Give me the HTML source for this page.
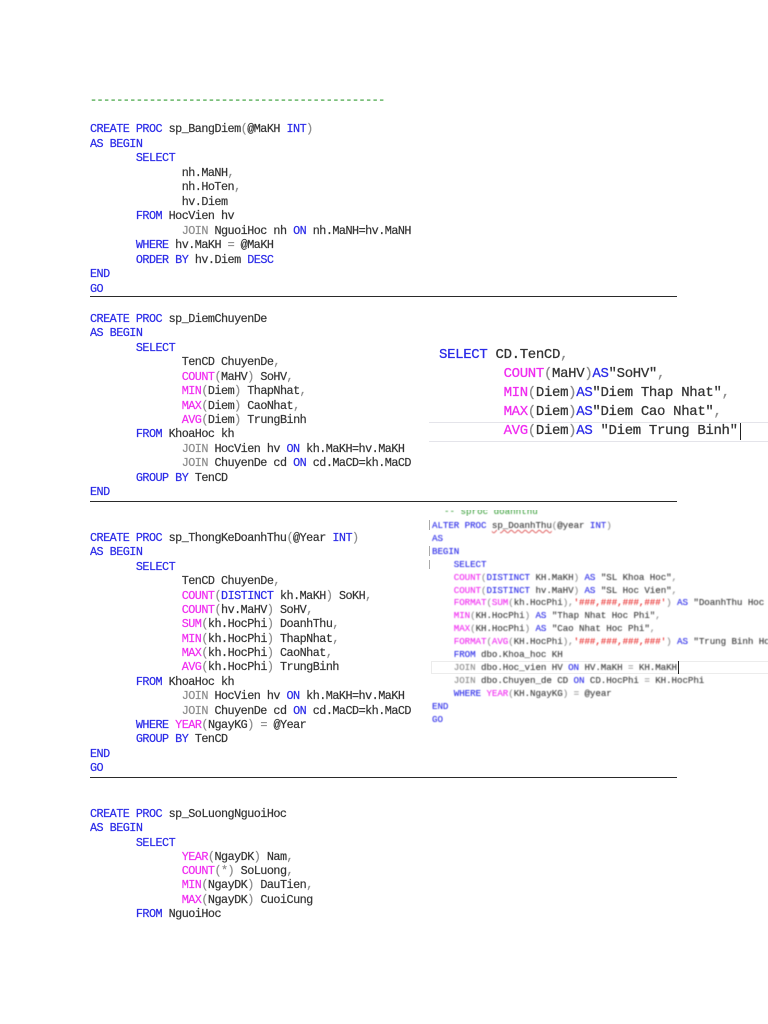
<!DOCTYPE html>
<html><head><meta charset="utf-8">
<style>
html,body{margin:0;padding:0;background:#fff;width:768px;height:1024px;overflow:hidden}
#p{position:relative;width:768px;height:1024px;overflow:hidden;background:#fff}
pre{position:absolute;margin:0;font-family:"Liberation Mono",monospace;color:#333;filter:blur(.3px)}
.c{left:90px;font-size:11.8px;letter-spacing:-.53px;width:330px;overflow:hidden;-webkit-text-stroke:.2px currentColor}
.k{color:#2a2ae8}.f{color:#f02cf0}.g{color:#8c8c8c}.n{color:#2f9a2f}.r{color:#e82020}
.hr{position:absolute;left:90px;width:587px;height:1px;background:#2a2a2a}
.a{left:439px;font-size:14px;letter-spacing:-.33px;line-height:19.1px;top:345.5px;width:329px;overflow:hidden;color:#333;filter:blur(.35px);-webkit-text-stroke:.25px currentColor}
.b{left:432px;top:520px;width:336px;overflow:hidden;font-size:9.2px;letter-spacing:-.07px;line-height:12.9px;color:#3a3a3a;filter:blur(.4px);-webkit-text-stroke:.1px currentColor}
.box{position:absolute}
</style></head><body><div id="p">

<pre class="c" style="top:93px;line-height:14.5px"><span class="n">---------------------------------------------</span>

<span class="k">CREATE PROC</span> sp_BangDiem<span class="g">(</span>@MaKH <span class="k">INT</span><span class="g">)</span>
<span class="k">AS BEGIN</span>
       <span class="k">SELECT</span>
              nh.MaNH<span class="g">,</span>
              nh.HoTen<span class="g">,</span>
              hv.Diem
       <span class="k">FROM</span> HocVien hv
              <span class="g">JOIN</span> NguoiHoc nh <span class="k">ON</span> nh.MaNH=hv.MaNH
       <span class="k">WHERE</span> hv.MaKH <span class="g">=</span> @MaKH
       <span class="k">ORDER BY</span> hv.Diem <span class="k">DESC</span>
<span class="k">END</span>
<span class="k">GO</span></pre>
<div class="hr" style="top:296px"></div>

<pre class="c" style="top:312px;line-height:14.42px"><span class="k">CREATE PROC</span> sp_DiemChuyenDe
<span class="k">AS BEGIN</span>
       <span class="k">SELECT</span>
              TenCD ChuyenDe<span class="g">,</span>
              <span class="f">COUNT</span><span class="g">(</span>MaHV<span class="g">)</span> SoHV<span class="g">,</span>
              <span class="f">MIN</span><span class="g">(</span>Diem<span class="g">)</span> ThapNhat<span class="g">,</span>
              <span class="f">MAX</span><span class="g">(</span>Diem<span class="g">)</span> CaoNhat<span class="g">,</span>
              <span class="f">AVG</span><span class="g">(</span>Diem<span class="g">)</span> TrungBinh
       <span class="k">FROM</span> KhoaHoc kh
              <span class="g">JOIN</span> HocVien hv <span class="k">ON</span> kh.MaKH=hv.MaKH
              <span class="g">JOIN</span> ChuyenDe cd <span class="k">ON</span> cd.MaCD=kh.MaCD
       <span class="k">GROUP BY</span> TenCD
<span class="k">END</span></pre>
<div class="hr" style="top:501px"></div>

<pre class="c" style="top:531px;line-height:14.38px"><span class="k">CREATE PROC</span> sp_ThongKeDoanhThu<span class="g">(</span>@Year <span class="k">INT</span><span class="g">)</span>
<span class="k">AS BEGIN</span>
       <span class="k">SELECT</span>
              TenCD ChuyenDe<span class="g">,</span>
              <span class="f">COUNT</span><span class="g">(</span><span class="k">DISTINCT</span> kh.MaKH<span class="g">)</span> SoKH<span class="g">,</span>
              <span class="f">COUNT</span><span class="g">(</span>hv.MaHV<span class="g">)</span> SoHV<span class="g">,</span>
              <span class="f">SUM</span><span class="g">(</span>kh.HocPhi<span class="g">)</span> DoanhThu<span class="g">,</span>
              <span class="f">MIN</span><span class="g">(</span>kh.HocPhi<span class="g">)</span> ThapNhat<span class="g">,</span>
              <span class="f">MAX</span><span class="g">(</span>kh.HocPhi<span class="g">)</span> CaoNhat<span class="g">,</span>
              <span class="f">AVG</span><span class="g">(</span>kh.HocPhi<span class="g">)</span> TrungBinh
       <span class="k">FROM</span> KhoaHoc kh
              <span class="g">JOIN</span> HocVien hv <span class="k">ON</span> kh.MaKH=hv.MaKH
              <span class="g">JOIN</span> ChuyenDe cd <span class="k">ON</span> cd.MaCD=kh.MaCD
       <span class="k">WHERE</span> <span class="f">YEAR</span><span class="g">(</span>NgayKG<span class="g">)</span> <span class="g">=</span> @Year
       <span class="k">GROUP BY</span> TenCD
<span class="k">END</span>
<span class="k">GO</span></pre>
<div class="hr" style="top:777px"></div>

<pre class="c" style="top:807px;line-height:14.3px"><span class="k">CREATE PROC</span> sp_SoLuongNguoiHoc
<span class="k">AS BEGIN</span>
       <span class="k">SELECT</span>
              <span class="f">YEAR</span><span class="g">(</span>NgayDK<span class="g">)</span> Nam<span class="g">,</span>
              <span class="f">COUNT</span><span class="g">(*)</span> SoLuong<span class="g">,</span>
              <span class="f">MIN</span><span class="g">(</span>NgayDK<span class="g">)</span> DauTien<span class="g">,</span>
              <span class="f">MAX</span><span class="g">(</span>NgayDK<span class="g">)</span> CuoiCung
       <span class="k">FROM</span> NguoiHoc</pre>

<!-- screenshot 1 -->
<div class="box" style="left:429px;top:422px;width:339px;height:20px;border-top:1px solid #e4e4ea;border-bottom:1px solid #e4e4ea;box-sizing:border-box"></div>
<pre class="a"><span class="k">SELECT</span> CD.TenCD<span class="g">,</span>
        <span class="f">COUNT</span><span class="g">(</span>MaHV<span class="g">)</span><span class="k">AS</span>"SoHV"<span class="g">,</span>
        <span class="f">MIN</span><span class="g">(</span>Diem<span class="g">)</span><span class="k">AS</span>"Diem Thap Nhat"<span class="g">,</span>
        <span class="f">MAX</span><span class="g">(</span>Diem<span class="g">)</span><span class="k">AS</span>"Diem Cao Nhat"<span class="g">,</span>
        <span class="f">AVG</span><span class="g">(</span>Diem<span class="g">)</span><span class="k">AS</span> "Diem Trung Binh"</pre>
<div class="box" style="left:740px;top:423px;width:1px;height:17px;background:#222"></div>

<!-- screenshot 2 -->
<div class="box" style="left:431px;top:661px;width:337px;height:13px;border:1px solid #ececec;border-right:0;box-sizing:border-box"></div>
<div style="position:absolute;left:432px;top:510px;width:336px;height:6px;overflow:hidden">
<pre style="left:12px;top:-3px;font-size:9.2px;line-height:10px;color:#2f9a2f;filter:blur(.4px)">-- sproc doanhthu</pre></div>
<pre class="b"><span class="k">ALTER PROC</span> <span style="text-decoration:underline wavy #e06060 1px">sp_DoanhThu</span><span class="g">(</span>@year <span class="k">INT</span><span class="g">)</span>
<span class="k">AS</span>
<span class="k">BEGIN</span>
    <span class="k">SELECT</span>
    <span class="f">COUNT</span><span class="g">(</span><span class="k">DISTINCT</span> KH.MaKH<span class="g">)</span> <span class="k">AS</span> "SL Khoa Hoc"<span class="g">,</span>
    <span class="f">COUNT</span><span class="g">(</span><span class="k">DISTINCT</span> hv.MaHV<span class="g">)</span> <span class="k">AS</span> "SL Hoc Vien"<span class="g">,</span>
    <span class="f">FORMAT</span><span class="g">(</span><span class="f">SUM</span><span class="g">(</span>kh.HocPhi<span class="g">),</span><span class="r">'###,###,###,###'</span><span class="g">)</span> <span class="k">AS</span> "DoanhThu Hoc Phi",
    <span class="f">MIN</span><span class="g">(</span>KH.HocPhi<span class="g">)</span> <span class="k">AS</span> "Thap Nhat Hoc Phi"<span class="g">,</span>
    <span class="f">MAX</span><span class="g">(</span>KH.HocPhi<span class="g">)</span> <span class="k">AS</span> "Cao Nhat Hoc Phi"<span class="g">,</span>
    <span class="f">FORMAT</span><span class="g">(</span><span class="f">AVG</span><span class="g">(</span>KH.HocPhi<span class="g">),</span><span class="r">'###,###,###,###'</span><span class="g">)</span> <span class="k">AS</span> "Trung Binh Hoc Phi"
    <span class="k">FROM</span> dbo.Khoa_hoc KH
    <span class="g">JOIN</span> dbo.Hoc_vien HV <span class="k">ON</span> HV.MaKH <span class="g">=</span> KH.MaKH
    <span class="g">JOIN</span> dbo.Chuyen_de CD <span class="k">ON</span> CD.HocPhi <span class="g">=</span> KH.HocPhi
    <span class="k">WHERE</span> <span class="f">YEAR</span><span class="g">(</span>KH.NgayKG<span class="g">)</span> <span class="g">=</span> @year
<span class="k">END</span>
<span class="k">GO</span></pre>
<div class="box" style="left:678px;top:661px;width:1px;height:13px;background:#222"></div>
<div class="box" style="left:429px;top:520px;width:1px;height:10px;background:#aaa"></div>
<div class="box" style="left:429px;top:546px;width:1px;height:10px;background:#aaa"></div>
<div class="box" style="left:429px;top:560px;width:1px;height:9px;background:#aaa"></div>

</div></body></html>
